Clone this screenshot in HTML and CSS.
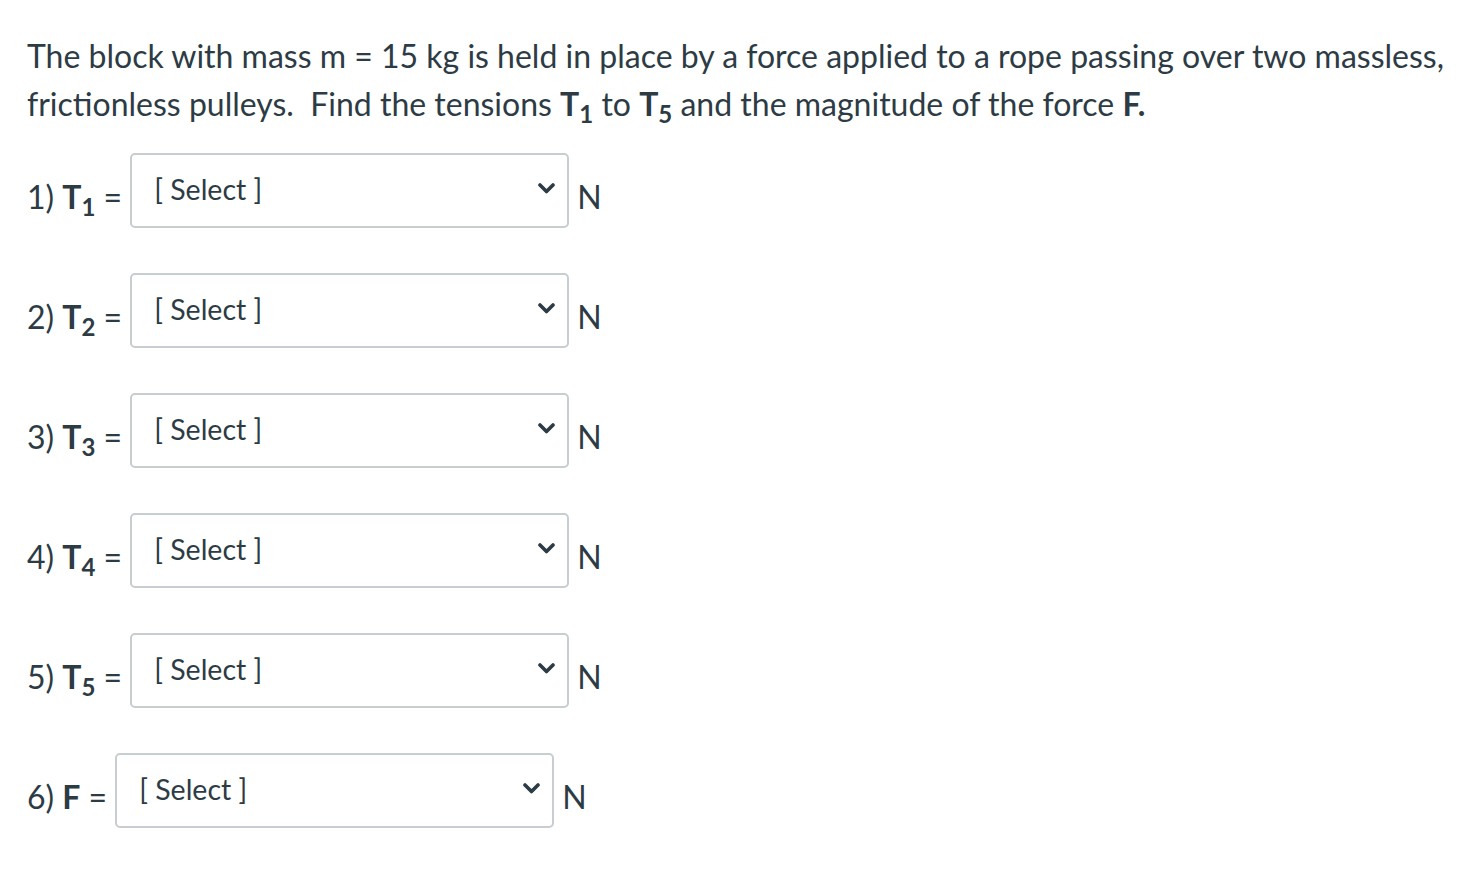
FILE: index.html
```html
<!DOCTYPE html>
<html>
<head>
<meta charset="utf-8">
<link rel="stylesheet" href="styles.css">
</head>
<body>
<div class="page">
  <p class="question">The block with mass m = 15 kg is held in place by a force applied to a rope passing over two massless, frictionless pulleys.&nbsp; Find the tensions <b>T<sub>1</sub></b> to <b>T<sub>5</sub></b> and the magnitude of the force <b>F.</b></p>
  <div class="answers">
    <div class="row"><span class="label">1) <b>T<sub>1</sub></b> =</span><div class="select"><span class="sel-text">[ Select ]</span><svg class="chev" viewBox="0 0 17 11" width="17" height="11"><path d="M2 2 L8.5 8.5 L15 2" fill="none" stroke="#2d3b45" stroke-width="3.6" stroke-linecap="round" stroke-linejoin="round"/></svg></div><span class="unit">N</span></div>
    <div class="row"><span class="label">2) <b>T<sub>2</sub></b> =</span><div class="select"><span class="sel-text">[ Select ]</span><svg class="chev" viewBox="0 0 17 11" width="17" height="11"><path d="M2 2 L8.5 8.5 L15 2" fill="none" stroke="#2d3b45" stroke-width="3.6" stroke-linecap="round" stroke-linejoin="round"/></svg></div><span class="unit">N</span></div>
    <div class="row"><span class="label">3) <b>T<sub>3</sub></b> =</span><div class="select"><span class="sel-text">[ Select ]</span><svg class="chev" viewBox="0 0 17 11" width="17" height="11"><path d="M2 2 L8.5 8.5 L15 2" fill="none" stroke="#2d3b45" stroke-width="3.6" stroke-linecap="round" stroke-linejoin="round"/></svg></div><span class="unit">N</span></div>
    <div class="row"><span class="label">4) <b>T<sub>4</sub></b> =</span><div class="select"><span class="sel-text">[ Select ]</span><svg class="chev" viewBox="0 0 17 11" width="17" height="11"><path d="M2 2 L8.5 8.5 L15 2" fill="none" stroke="#2d3b45" stroke-width="3.6" stroke-linecap="round" stroke-linejoin="round"/></svg></div><span class="unit">N</span></div>
    <div class="row"><span class="label">5) <b>T<sub>5</sub></b> =</span><div class="select"><span class="sel-text">[ Select ]</span><svg class="chev" viewBox="0 0 17 11" width="17" height="11"><path d="M2 2 L8.5 8.5 L15 2" fill="none" stroke="#2d3b45" stroke-width="3.6" stroke-linecap="round" stroke-linejoin="round"/></svg></div><span class="unit">N</span></div>
    <div class="row"><span class="label">6) <b>F</b> =</span><div class="select"><span class="sel-text">[ Select ]</span><svg class="chev" viewBox="0 0 17 11" width="17" height="11"><path d="M2 2 L8.5 8.5 L15 2" fill="none" stroke="#2d3b45" stroke-width="3.6" stroke-linecap="round" stroke-linejoin="round"/></svg></div><span class="unit">N</span></div>
  </div>
</div>
</body>
</html>
```
FILE: styles.css
```css
html, body {
  margin: 0;
  padding: 0;
  background: #ffffff;
}
body {
  font-family: Lato, "Open Sans", sans-serif;
  color: #2d3b45;
}
.page {
  padding: 32px 27px 0 27px;
}
.question {
  margin: 0;
  font-size: 32px;
  line-height: 48px;
  max-width: 1440px;
}
.question b {
  font-weight: 700;
}
sub {
  font-size: 24px;
  line-height: 0;
  vertical-align: -7px;
}
.answers {
  margin-top: 25px;
  display: flex;
  flex-direction: column;
  gap: 45px;
}
.row {
  display: flex;
  align-items: center;
  font-size: 32px;
  height: 75px;
}
.label {
  white-space: pre;
  margin-top: 12px;
  margin-right: 8px;
}
.label b {
  font-weight: 700;
}
.select {
  box-sizing: border-box;
  width: 439px;
  height: 75px;
  border: 2px solid #c7cdd1;
  border-radius: 5px;
  display: flex;
  align-items: center;
  justify-content: space-between;
  padding: 0 12px 0 22px;
}
.sel-text {
  font-size: 28.5px;
  margin-top: -3px;
}
.chev {
  display: block;
  margin-top: -4px;
}
.unit {
  margin-left: 8px;
  margin-top: 12px;
}
```
